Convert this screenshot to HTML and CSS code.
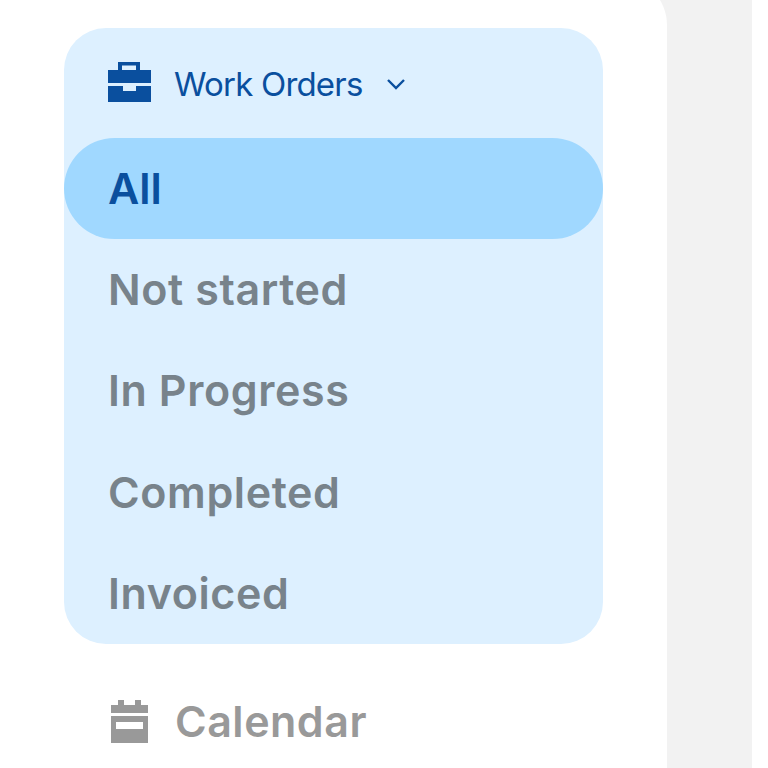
FILE: index.html
```html
<!DOCTYPE html>
<html lang="en">
<head>
  <meta charset="UTF-8" />
  <meta name="viewport" content="width=device-width, initial-scale=1" />
  <title>Work Orders</title>
  <link rel="stylesheet" href="styles.css">
</head>
<body>

<div class="page">
  <nav class="sidebar">
    <div class="nav-group">
      <div class="group-header">
        <svg class="icon-briefcase" viewBox="0 0 43 40" aria-hidden="true">
          <path fill-rule="evenodd" d="M10 8V0h22v8h11v13H0V8zM14 3.500V8h14V3.500z"/>
          <path d="M0 24h15v5h13v-5h15v16H0z"/>
        </svg>
        <span class="group-title">Work Orders</span>
        <svg class="icon-chevron" viewBox="0 0 20 12" aria-hidden="true">
          <path d="M2 2l8 8 8-8" fill="none" stroke="currentColor" stroke-width="2.400"/>
        </svg>
      </div>
      <div class="nav-item active">All</div>
      <div class="nav-item">Not started</div>
      <div class="nav-item">In Progress</div>
      <div class="nav-item">Completed</div>
      <div class="nav-item">Invoiced</div>
    </div>

    <div class="nav-link">
      <svg class="icon-calendar" viewBox="0 0 37 43" aria-hidden="true">
        <path d="M7 0h6v5h11V0h6v5h7v8H0V5h7z"/>
        <path fill-rule="evenodd" d="M0 16h37v27H0zM5 22v7h27v-7z"/>
      </svg>
      <span>Calendar</span>
    </div>
  </nav>
  <div class="content"></div>
</div>

</body>
</html>
```

FILE: styles.css
```css
html, body {
  margin: 0;
  height: 100%;
  background: white;
  overflow: hidden;
}
body {
  font-family: Inter, "Liberation Sans", sans-serif;
}
.page {
  display: flex;
  height: 768px;
  width: 752px;
  background: #f2f2f2;
  overflow: hidden;
}
.sidebar {
  width: 667px;
  box-sizing: border-box;
  margin-top: -23px;
  padding: 51px 64px 0;
  background: white;
  border-top-right-radius: 48px;
}
.nav-group {
  width: 539px;
  height: 616px;
  background: #ddf0ff;
  border-radius: 42px;
}
.group-header {
  display: flex;
  align-items: center;
  height: 110px;
  padding: 0 44px;
  box-sizing: border-box;
  color: #0a4f9e;
}
.icon-briefcase {
  width: 43px;
  height: 40px;
  fill: #0a4f9e;
  margin-right: 23px;
  margin-top: -2px;
}
.group-title {
  font-size: 33px;
  letter-spacing: -0.8px;
  margin-top: 2px;
}
.icon-chevron {
  width: 20px;
  height: 12px;
  margin-left: 23px;
  margin-top: 2px;
}
.nav-item {
  height: 101.200px;
  line-height: 101.200px;
  padding-left: 44px;
  font-size: 43px;
  font-weight: 600;
  letter-spacing: 0.6px;
  color: #78838b;
}
.nav-item.active {
  background: #a0d8ff;
  color: #0a4f9e;
  border-radius: 51px;
  letter-spacing: 0;
}
.nav-link {
  display: flex;
  align-items: center;
  margin-top: 51px;
  padding-left: 47px;
  font-size: 43px;
  font-weight: 600;
  letter-spacing: 0.5px;
  color: #999999;
}
.icon-calendar {
  width: 37px;
  height: 43px;
  fill: #999999;
  margin-right: 27px;
}
```
